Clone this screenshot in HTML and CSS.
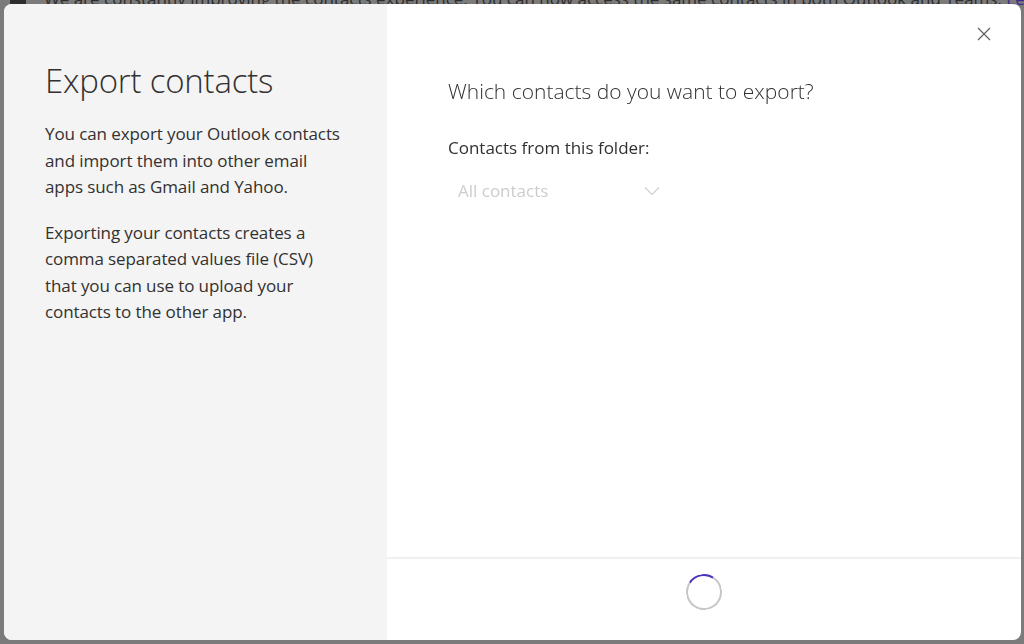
FILE: index.html
```html
<!DOCTYPE html>
<html lang="en">
<head>
    <meta charset="UTF-8">
    <meta name="viewport" content="width=device-width, initial-scale=1.0">
    <title>Outlook - Export contacts</title>
    <link rel="stylesheet" href="styles.css">
</head>
<body>
    <!-- Page behind the dialog, dimmed by the overlay -->
    <div class="page">
        <div class="banner">
            <span class="banner-icon"></span>
            <span class="banner-text">We are constantly improving the contacts experience. You can now access the same contacts in both Outlook and Teams. <a href="#" class="banner-link">Learn more</a></span>
        </div>
    </div>

    <div class="overlay">
        <div class="dialog" role="dialog" aria-labelledby="exportTitle">
            <!-- Info column -->
            <div class="info">
                <h1 class="info-title" id="exportTitle">Export contacts</h1>
                <p>You can export your Outlook contacts and import them into other email apps such as Gmail and Yahoo.</p>
                <p>Exporting your contacts creates a comma separated values file (CSV) that you can use to upload your contacts to the other app.</p>
            </div>

            <!-- Form column -->
            <div class="form">
                <div class="form-top">
                    <button class="close-btn" aria-label="Close">
                        <svg width="14" height="14" viewBox="0 0 14 14">
                            <path d="M1 1L13 13M13 1L1 13" stroke="#605e5c" stroke-width="1.2" fill="none"/>
                        </svg>
                    </button>
                </div>
                <div class="form-body">
                    <h2 class="form-title">Which contacts do you want to export?</h2>
                    <label class="field-label">Contacts from this folder:</label>
                    <div class="select">
                        <span>All contacts</span>
                        <svg width="16" height="10" viewBox="0 0 16 10">
                            <path d="M1 1.5L8 8.5L15 1.5" stroke="#d2d0ce" stroke-width="1.2" fill="none"/>
                        </svg>
                    </div>
                </div>
                <div class="form-footer">
                    <div class="spinner"></div>
                </div>
            </div>
        </div>
    </div>
</body>
</html>
```

FILE: styles.css
```css
* {
    margin: 0;
    padding: 0;
    box-sizing: border-box;
}
:root {
    --overlay-bg: #7b7b7b;
    --panel-bg: #f4f4f4;
    --text-color: #323130;
    --muted-text: #cfcdcb;
    --ring: #c8c6c4;
    --divider: #f0f0f0;
    --brand: #4f2fc0;
}
body {
    font-family: 'Open Sans', 'Noto Sans', Arial, sans-serif;
    background-color: var(--overlay-bg);
    color: var(--text-color);
    height: 100vh;
    overflow: hidden;
}
/* Dimmed page behind */
.banner {
    height: 8px;
    display: flex;
    align-items: flex-end;
    gap: 18px;
    padding-left: 10px;
    overflow: hidden;
}
.banner-icon {
    width: 16px;
    height: 16px;
    background: #2e2e2e;
    border-radius: 3px;
    flex-shrink: 0;
    margin-bottom: -6px;
}
.banner-text {
    font-size: 17px;
    line-height: 18px;
    color: #2e2e2e;
    white-space: nowrap;
}
.banner-link {
    color: #3b2a8a;
    text-decoration: none;
}
/* Modal */
.overlay {
    position: fixed;
    top: 4px;
    left: 4px;
    right: 3px;
    bottom: 4px;
}
.dialog {
    height: 100%;
    display: grid;
    grid-template-columns: 383px 1fr;
    background: #fff;
    border-radius: 8px;
    overflow: hidden;
}
.info {
    background: var(--panel-bg);
    padding: 55px 44px 0 41px;
}
.info-title {
    font-size: 33px;
    font-weight: 300;
    line-height: 44px;
    margin-bottom: 18px;
    letter-spacing: -0.2px;
}
.info p {
    font-size: 17px;
    line-height: 26.5px;
    margin-bottom: 19px;
    letter-spacing: -0.1px;
}
.form {
    display: flex;
    flex-direction: column;
}
.form-top {
    display: flex;
    justify-content: flex-end;
    padding: 23px 30px 0 0;
}
.close-btn {
    background: none;
    border: none;
    width: 14px;
    height: 14px;
    cursor: pointer;
}
.form-body {
    flex: 1;
    padding: 36px 0 0 61px;
}
.form-title {
    font-size: 21px;
    font-weight: 300;
    line-height: 28px;
    margin-bottom: 31px;
}
.field-label {
    display: block;
    font-size: 17px;
    line-height: 24px;
    margin-bottom: 19px;
}
.select {
    display: flex;
    align-items: center;
    width: 212px;
    padding-left: 10px;
    justify-content: space-between;
    color: var(--muted-text);
    font-size: 17px;
    line-height: 24px;
}
.form-footer {
    height: 83px;
    border-top: 2px solid var(--divider);
    display: flex;
    align-items: center;
    justify-content: center;
    padding-bottom: 16px;
}
.spinner {
    width: 36px;
    height: 36px;
    border-radius: 50%;
    border: 2px solid var(--ring);
    border-top-color: var(--brand);
    transform: rotate(-12deg);
}
```
